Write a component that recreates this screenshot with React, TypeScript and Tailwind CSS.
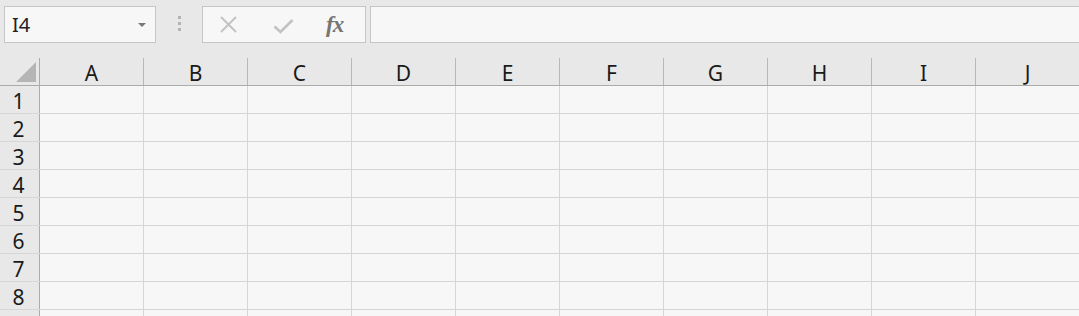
const columns = ['A', 'B', 'C', 'D', 'E', 'F', 'G', 'H', 'I', 'J']
const rows = [1, 2, 3, 4, 5, 6, 7, 8]

export default function App() {
  return (
    <div
      className="w-[1079px] h-[316px] overflow-hidden bg-[#e8e8e8] text-[#1a1a1a]"
      style={{ fontFamily: '"Noto Sans", "Liberation Sans", "Noto Sans CJK SC", sans-serif' }}
    >
      {/* Formula bar */}
      <div className="flex items-start h-[58px] pt-[6px] pl-[4px]">
        {/* Name box */}
        <div className="w-[152px] h-[37px] flex items-center justify-between bg-[#f7f7f7] border border-[#c6c6c6] pl-[7px] pr-[9px]">
          <span className="text-[20px] leading-none text-[#222]">I4</span>
          <span className="w-0 h-0 border-l-[4px] border-r-[4px] border-t-[4px] border-l-transparent border-r-transparent border-t-[#777] mt-[1px]" />
        </div>

        {/* Grip dots */}
        <div className="w-[46px] h-[37px] flex flex-col items-center pt-[10px] gap-[3px] pl-[1px]">
          <span className="w-[3px] h-[3px] bg-[#b4b4b4]" />
          <span className="w-[3px] h-[3px] bg-[#b4b4b4]" />
          <span className="w-[3px] h-[3px] bg-[#b4b4b4]" />
        </div>

        {/* Cancel / enter / fx */}
        <div className="w-[164px] h-[37px] flex items-center bg-[#f7f7f7] border border-[#c6c6c6]">
          <svg className="ml-[16px]" width="19" height="19" viewBox="0 0 19 19">
            <path d="M2 2 L17 17 M17 2 L2 17" stroke="#c2c2c2" strokeWidth="1.8" fill="none" />
          </svg>
          <svg className="ml-[35px] mt-[2px]" width="21" height="16" viewBox="0 0 21 16">
            <path d="M1.5 8.5 L7.5 14 L19.5 2" stroke="#c2c2c2" strokeWidth="2.6" fill="none" />
          </svg>
          <span
            className="ml-[32px] text-[23px] italic font-bold text-[#757575] leading-none tracking-[-1px]"
            style={{ fontFamily: '"Liberation Serif", "DejaVu Serif", serif' }}
          >
            fx
          </span>
        </div>

        {/* Formula input */}
        <div className="flex-1 h-[37px] ml-[4px] bg-[#f7f7f7] border-y border-l border-[#c6c6c6]" />
      </div>

      {/* Column headers */}
      <div className="flex h-[28px] border-b border-[#ababab]">
        <div className="w-[40px] shrink-0 border-r border-[#ababab] flex items-end justify-end pr-[3px] pb-[3px]">
          <svg width="20" height="20" viewBox="0 0 20 20">
            <path d="M20 0 L20 20 L0 20 Z" fill="#b5b5b5" />
          </svg>
        </div>
        {columns.map((c) => (
          <div
            key={c}
            className="w-[104px] shrink-0 border-r border-[#b8b8b8] flex justify-center pt-[5px] text-[21px] leading-[20px] text-[#1a1a1a]"
          >
            {c}
          </div>
        ))}
      </div>

      {/* Rows */}
      {rows.map((r) => (
        <div key={r} className="flex h-[28px] border-b border-[#d6d6d6]">
          <div className="w-[40px] shrink-0 bg-[#e8e8e8] border-r border-[#ababab] flex justify-center pr-[2px] pt-[5px] text-[21px] leading-[20px] text-[#1a1a1a]">
            {r}
          </div>
          {columns.map((c) => (
            <div key={c} className="w-[104px] shrink-0 bg-[#f7f7f7] border-r border-[#d6d6d6]" />
          ))}
        </div>
      ))}

      {/* Partially visible next row */}
      <div className="flex h-[28px]">
        <div className="w-[40px] shrink-0 bg-[#e8e8e8] border-r border-[#ababab]" />
        {columns.map((c) => (
          <div key={c} className="w-[104px] shrink-0 bg-[#f7f7f7] border-r border-[#d6d6d6]" />
        ))}
      </div>
    </div>
  )
}
